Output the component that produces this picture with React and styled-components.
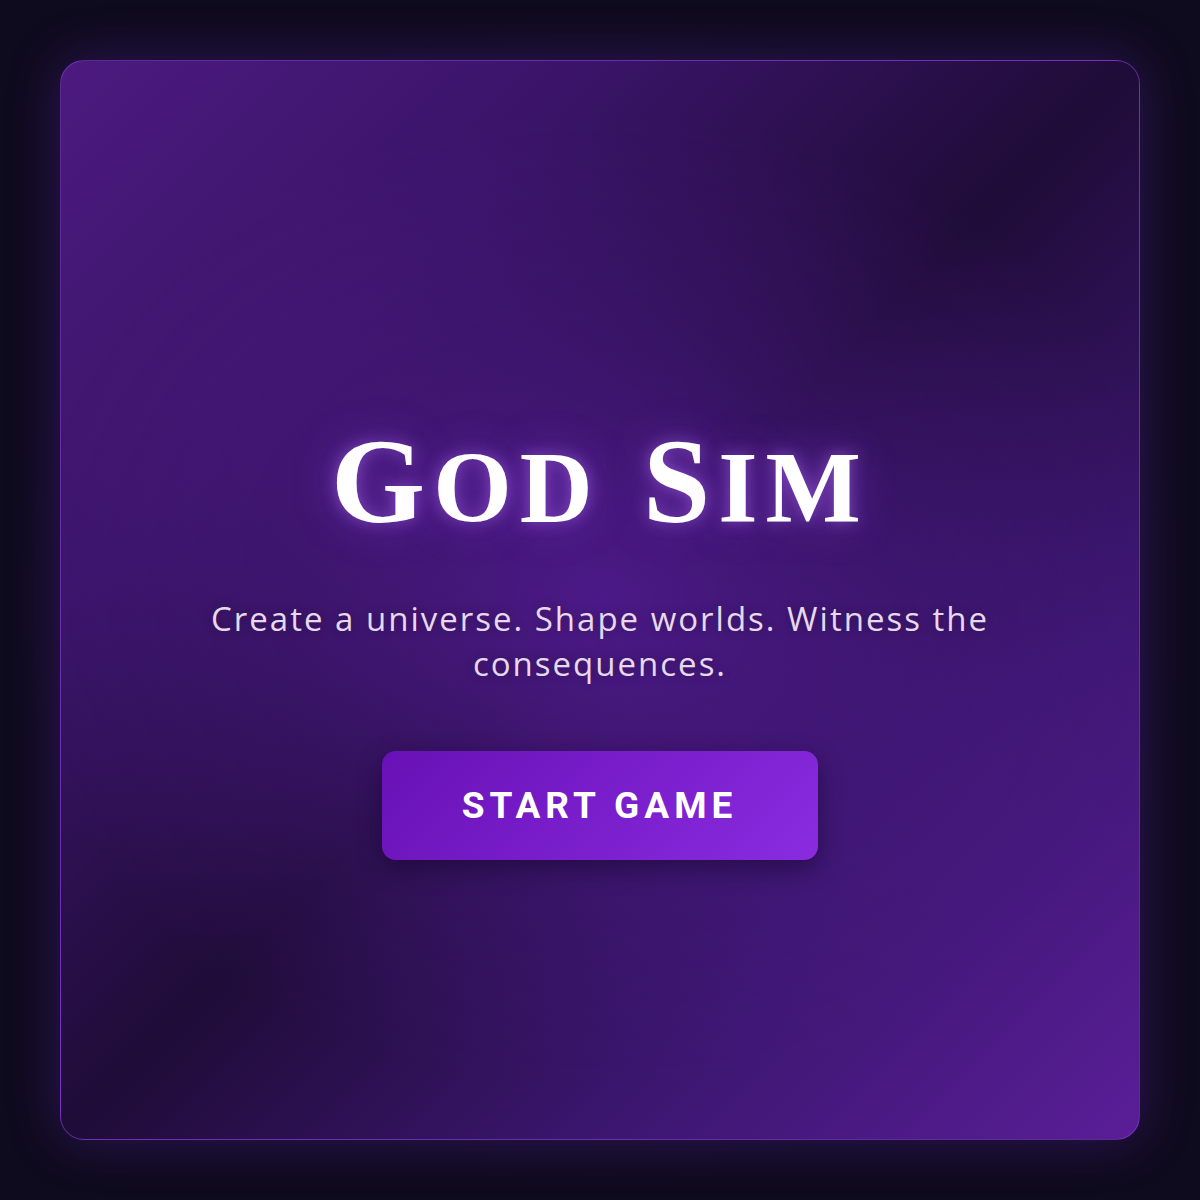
import React from "react";
import styled, { createGlobalStyle } from "styled-components";

const GlobalStyle = createGlobalStyle`
  html, body {
    margin: 0;
    padding: 0;
    background: #0f0b1e;
  }
`;

const Page = styled.main`
  box-sizing: border-box;
  width: 1200px;
  height: 1200px;
  padding: 60px;
  background: radial-gradient(circle at 50% 50%, #1a0f33 0%, #0f0b1e 70%);
`;

const Card = styled.section`
  box-sizing: border-box;
  height: 100%;
  border-radius: 24px;
  border: 1.5px solid rgba(140, 70, 220, 0.55);
  background:
    radial-gradient(ellipse 55% 45% at 50% 50%, rgba(84, 28, 150, 0.85) 0%, rgba(84, 28, 150, 0.35) 55%, rgba(84, 28, 150, 0) 100%),
    linear-gradient(135deg, #4c1a80 0%, #3a1468 25%, #1f0c38 50%, #3c1670 75%, #5a1e98 100%);
  box-shadow: 0 0 50px rgba(110, 40, 200, 0.35);
  display: flex;
  flex-direction: column;
  align-items: center;
  padding-top: 348px;
`;

const Title = styled.h1`
  margin: 0;
  font-family: "Liberation Serif", "DejaVu Serif", serif;
  font-weight: 700;
  font-size: 121px;
  color: #ffffff;
  letter-spacing: 8px;
  word-spacing: 4px;
  line-height: 1.2;
  text-shadow: 0 0 16px rgba(190, 120, 255, 0.5), 0 0 44px rgba(160, 80, 255, 0.45);
`;

const Letter = styled.span`
  font-size: ${(p) => (p.$big ? "121px" : "101px")};
`;

const Tagline = styled.p`
  margin: 42px 0 0;
  max-width: 840px;
  text-align: center;
  font-family: "Open Sans", "Noto Sans", sans-serif;
  font-size: 33px;
  line-height: 45px;
  letter-spacing: 2px;
  color: #e6d8ef;
  text-shadow: 0 0 10px rgba(0, 0, 0, 0.3);
`;

const StartButton = styled.button`
  margin-top: 65px;
  width: 436px;
  height: 109px;
  border: none;
  border-radius: 14px;
  background: linear-gradient(135deg, #6811b6 0%, #8a2be0 100%);
  color: #ffffff;
  font-family: "Roboto", "Liberation Sans", sans-serif;
  font-weight: 700;
  font-size: 37px;
  letter-spacing: 5px;
  padding-left: 5px;
  box-shadow: 0 8px 24px rgba(10, 0, 30, 0.45);
  cursor: pointer;
`;

function SmallCaps({ text }) {
  return text.split(" ").map((word, i) => (
    <React.Fragment key={i}>
      {i > 0 && " "}
      <Letter $big>{word[0].toUpperCase()}</Letter>
      <Letter>{word.slice(1).toUpperCase()}</Letter>
    </React.Fragment>
  ));
}

export default function App() {
  return (
    <>
      <GlobalStyle />
      <Page>
        <Card>
          <Title>
            <SmallCaps text="God Sim" />
          </Title>
          <Tagline>
            Create a universe. Shape worlds. Witness the consequences.
          </Tagline>
          <StartButton>START GAME</StartButton>
        </Card>
      </Page>
    </>
  );
}
